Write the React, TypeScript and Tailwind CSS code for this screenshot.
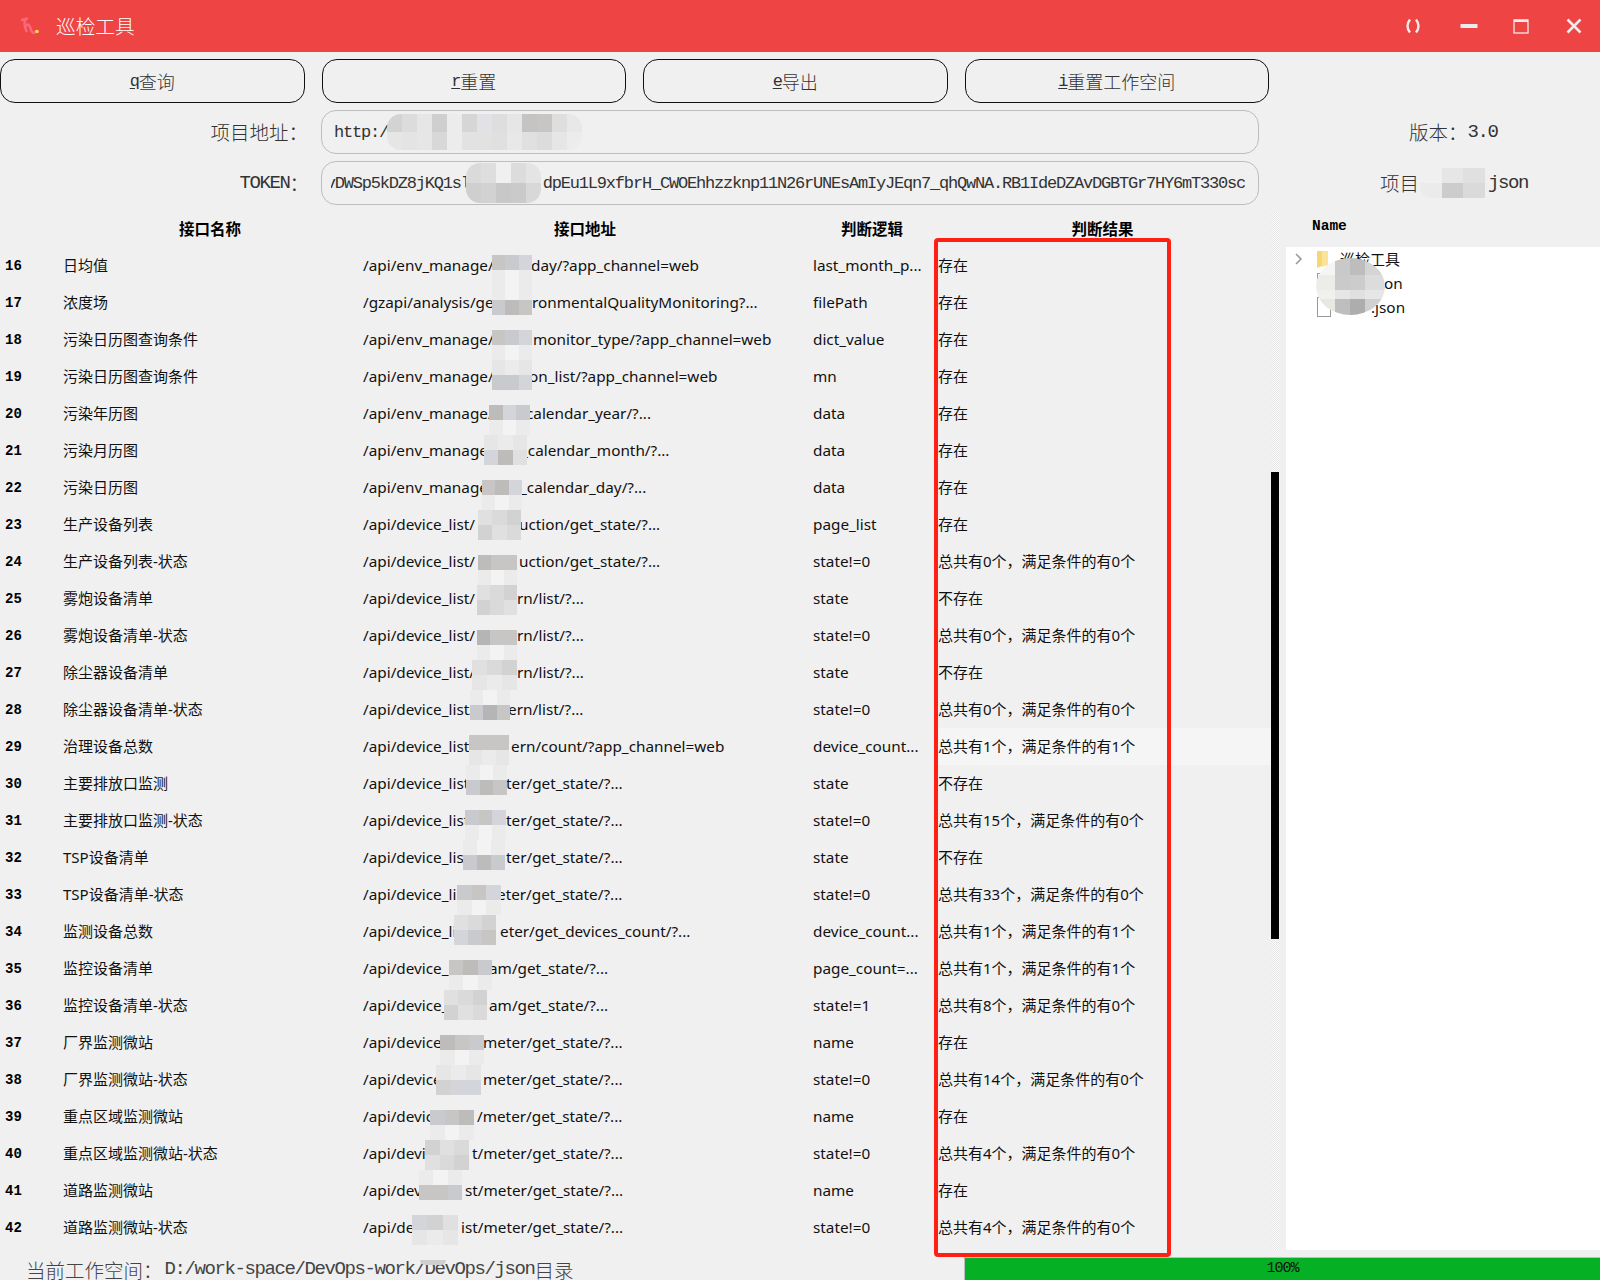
const d1 = "#c8c6c5", d2 = "#c9cace", d3 = "#d4d5da", d4 = "#bdbcbb", d5 = "#b5b5b5";
const l1 = "#ebebeb", l2 = "#f3f3f3", l3 = "#e6e6e6", m1 = "#dadada", m2 = "#d2d2d2", m3 = "#e0e0e0";

type Row = [number, string, string, string, number, number, string, string, string[], string[]];

const has = "存在";
const no = "不存在";
const cnt = (a: number, b: number) => `总共有${a}个，满足条件的有${b}个`;
const DK = [d1, d2, d3];
const DK2 = [d4, d3, d2];
const DK3 = [d2, d4, d1];
const LT = [l1, l2, l1];
const LT2 = [l3, l1, l3];
const MD = [m3, m1, m2];
const MD2 = [m2, m3, m1];

const mosaicTops = [255, 285, 330, 360, 405, 435, 480, 510, 555, 585, 630, 660, 690, 735, 765, 810, 840, 885, 915, 960, 990, 1035, 1065, 1110, 1140, 1170, 1215];
const rightShift = [-1, 0, 1, -3, -4, -6, -2, -2, 2, 0, 0, 0, -2, 2, -1, 0, 1, -4, 4, -3, 2, -1, 2, 3, 3, 3, 3];

const rows: Row[] = [
  [16, "日均值", "/api/env_manage/", "day/?app_channel=web", 492, 532, "last_month_p...", has, DK, LT],
  [17, "浓度场", "/gzapi/analysis/get", "ronmentalQualityMonitoring?...", 492, 532, "filePath", has, LT, DK3],
  [18, "污染日历图查询条件", "/api/env_manage/", "monitor_type/?app_channel=web", 492, 532, "dict_value", has, DK, LT],
  [19, "污染日历图查询条件", "/api/env_manage/", "on_list/?app_channel=web", 492, 532, "mn", has, LT2, [d2, d2, d3]],
  [20, "污染年历图", "/api/env_manage/", "calendar_year/?...", 489, 530, "data", has, DK2, LT],
  [21, "污染月历图", "/api/env_manage/", "_calendar_month/?...", 484, 527, "data", has, LT2, [d3, d4, m3]],
  [22, "污染日历图", "/api/env_manage/", "_calendar_day/?...", 482, 522, "data", has, [d1, d4, d3], LT],
  [23, "生产设备列表", "/api/device_list/", "uction/get_state/?...", 478, 521, "page_list", has, MD, MD2],
  [24, "生产设备列表-状态", "/api/device_list/", "uction/get_state/?...", 478, 517, "state!=0", cnt(0, 0), [d4, d1, d1], LT],
  [25, "雾炮设备清单", "/api/device_list/", "rn/list/?...", 477, 517, "state", no, MD, [m2, m1, m3]],
  [26, "雾炮设备清单-状态", "/api/device_list/", "rn/list/?...", 477, 517, "state!=0", cnt(0, 0), [d5, d1, d1], LT],
  [27, "除尘器设备清单", "/api/device_list/", "rn/list/?...", 472, 517, "state", no, MD, LT2],
  [28, "除尘器设备清单-状态", "/api/device_list/", "ern/list/?...", 470, 510, "state!=0", cnt(0, 0), LT, [d2, d5, d1]],
  [29, "治理设备总数", "/api/device_list/", "ern/count/?app_channel=web", 469, 509, "device_count...", cnt(1, 1), [d1, d1, d1], LT2],
  [30, "主要排放口监测", "/api/device_list/", "ter/get_state/?...", 466, 507, "state", no, LT, [d2, d4, d1]],
  [31, "主要排放口监测-状态", "/api/device_list/", "ter/get_state/?...", 465, 506, "state!=0", cnt(15, 0), [d2, d1, d3], LT],
  [32, "TSP设备清单", "/api/device_list/", "ter/get_state/?...", 463, 505, "state", no, LT, [d2, d4, d2]],
  [33, "TSP设备清单-状态", "/api/device_list/", "eter/get_state/?...", 457, 501, "state!=0", cnt(33, 0), [d2, d1, d3], LT],
  [34, "监测设备总数", "/api/device_list/", "eter/get_devices_count/?...", 454, 496, "device_count...", cnt(1, 1), MD, [d3, d2, d1]],
  [35, "监控设备清单", "/api/device_", "am/get_state/?...", 449, 492, "page_count=...", cnt(1, 1), [d1, d4, d2], LT],
  [36, "监控设备清单-状态", "/api/device_", "am/get_state/?...", 444, 487, "state!=1", cnt(8, 0), MD, MD2],
  [37, "厂界监测微站", "/api/device_", "meter/get_state/?...", 440, 484, "name", has, [d4, d1, d2], LT],
  [38, "厂界监测微站-状态", "/api/device_", "meter/get_state/?...", 436, 481, "state!=0", cnt(14, 0), LT2, [m2, d3, d3]],
  [39, "重点区域监测微站", "/api/device_", "/meter/get_state/?...", 430, 474, "name", has, [d2, d1, d4], LT],
  [40, "重点区域监测微站-状态", "/api/device", "t/meter/get_state/?...", 425, 469, "state!=0", cnt(4, 0), MD2, MD],
  [41, "道路监测微站", "/api/device", "st/meter/get_state/?...", 419, 462, "name", has, LT, [d1, d1, d2]],
  [42, "道路监测微站-状态", "/api/devic", "ist/meter/get_state/?...", 412, 458, "state!=0", cnt(4, 0), [d3, m2, m3], LT2],
];

function Mosaic({ top, bottom, width, offset }: { top: string[]; bottom: string[]; width: number; offset: number }) {
  return (
    <div className="relative z-10 grid h-[30px] shrink-0 grid-cols-3 grid-rows-2 self-start" style={{ width, marginTop: offset }}>
      {[...top, ...bottom].map((c, i) => (
        <div key={i} style={{ backgroundColor: c }} />
      ))}
    </div>
  );
}

function Cells({ colors }: { colors: string[] }) {
  return (
    <>
      {colors.map((c, i) => (
        <div key={i} style={{ backgroundColor: c }} />
      ))}
    </>
  );
}

function Cjk({ children, big = false }: { children: React.ReactNode; big?: boolean }) {
  return (
    <span
      className={
        big
          ? "font-['Noto_Sans_CJK_SC','Liberation_Mono',sans-serif] text-[19.5px] leading-none tracking-normal font-light"
          : "font-['Noto_Sans_CJK_SC','Liberation_Mono',sans-serif] text-[18px] leading-none tracking-normal font-light"
      }
    >
      {children}
    </span>
  );
}

const mono = "font-['Liberation_Mono','Noto_Sans_CJK_SC',monospace] text-[17px] leading-none tracking-[-1.2px]";
const mono10 = "font-['Liberation_Mono','Noto_Sans_CJK_SC',monospace] text-[19px] leading-none tracking-[-1.4px]";

function TopButton({ k, label }: { k: string; label: string }) {
  return (
    <button className={`flex h-[44px] items-center justify-center rounded-[15px] border-[1.5px] border-[#111] bg-[#f0f0f0] text-[#333] ${mono}`}>
      <span className="underline underline-offset-[2px]">{k}</span>
      <Cjk>{label}</Cjk>
    </button>
  );
}

export default function App() {
  return (
    <div className="relative h-[1280px] w-[1600px] overflow-hidden bg-[#f0f0f0] font-['Noto_Sans','Noto_Sans_CJK_SC',sans-serif] text-[15.3px] text-[#111]">
      {/* Title bar */}
      <header className="flex h-[52px] items-center justify-between bg-[#ef4444] pl-[20px] pr-[18px]">
        <div className="flex items-center gap-[16px]">
          <svg width="20" height="20" viewBox="0 0 20 20" fill="none" className="mt-[1px]">
            <path d="M2 4 L7 2.5 M5.5 3 C4 7 4.5 11 6.5 15 M6 10 C9 6 10 11 11.5 15 C13 18 15 17 16 15" stroke="#f9677a" strokeWidth="2.6" strokeLinecap="round" />
            <circle cx="17" cy="15.5" r="1.8" fill="#fde047" />
          </svg>
          <span className="font-['Noto_Sans_CJK_SC',sans-serif] text-[19.7px] font-extralight text-white">巡检工具</span>
        </div>
        <div className="flex items-center gap-[37px]">
          <svg width="16" height="16" viewBox="0 0 16 16" fill="none" stroke="#ececec" strokeWidth="2.4">
            <path d="M5 1.5 C1.5 6 1.5 10 5 14.5 M11 1.5 C14.5 6 14.5 10 11 14.5" />
          </svg>
          <svg width="18" height="16" viewBox="0 0 18 16" fill="#ececec" className="ml-[2px] mr-[-2px]">
            <rect x="0.5" y="6" width="17" height="4" />
          </svg>
          <svg width="16" height="16" viewBox="0 0 16 16" fill="none" stroke="#ececec">
            <rect x="1" y="2" width="14" height="13" strokeWidth="1.3" />
            <path d="M1 2.8 H15" strokeWidth="2.4" />
          </svg>
          <svg width="16" height="16" viewBox="0 0 16 16" fill="none" stroke="#ececec" strokeWidth="2.6">
            <path d="M1.5 1.5 L14.5 14.5 M14.5 1.5 L1.5 14.5" />
          </svg>
        </div>
      </header>

      {/* Buttons */}
      <div className="mt-[7px] grid w-[1269px] grid-cols-4 gap-[17px]">
        <TopButton k="q" label="查询" />
        <TopButton k="r" label="重置" />
        <TopButton k="e" label="导出" />
        <TopButton k="i" label="重置工作空间" />
      </div>

      {/* Form */}
      <div className="mt-[7px] grid grid-cols-[309px_938px_329px] gap-x-[12px] gap-y-[7px] text-[#333]">
        <div className={`flex h-[44px] items-center justify-end pr-[1px] ${mono10}`}>
          <Cjk big>项目地址：</Cjk>
        </div>
        <div className={`flex h-[44px] items-center rounded-[15px] border-[1.5px] border-[#bdbdbd] pl-[12px] ${mono}`}>
          http:/
          <div className="ml-[-1px] grid h-[36px] w-[195px] grid-cols-[repeat(13,1fr)] grid-rows-2 overflow-hidden rounded-[14px]">
            <Cells colors={["#d3d3d3", "#dcdcdc", "#e6e6e6", "#cfcfcf", "#ececec", "#d6d6d6", "#e2e2e6", "#dedede", "#e6e6e6", "#c6c4c2", "#c8c6c4", "#dedede", "#e8e8e8", "#e6e6e6", "#e4e4e4", "#e6e6e6", "#d8d8d8", "#ececec", "#e2e2e2", "#e2e2e2", "#e0e0e0", "#e8e8e8", "#e0e0e0", "#dcdcdc", "#e6e6e6", "#ececec"]} />
          </div>
        </div>
        <div className={`flex h-[44px] items-center pl-[138px] ${mono10}`}>
          <Cjk big>版本：</Cjk>3.0
        </div>
        <div className={`flex h-[44px] items-center justify-end ${mono10}`}>
          TOKEN<Cjk big>：</Cjk>
        </div>
        <div className={`flex h-[44px] items-center rounded-[15px] border-[1.5px] border-[#bdbdbd] pl-[9px] pr-[13px] ${mono}`}>
          <div className="flex h-full flex-1 items-center justify-end overflow-hidden whitespace-nowrap">
            <span className="shrink-0">vDWSp5kDZ8jKQ1sl</span>
            <div className="relative z-10 ml-[-4px] grid h-[40px] w-[75px] shrink-0 grid-cols-5 grid-rows-2 overflow-hidden rounded-[14px]">
              <Cells colors={["#dadada", "#dedede", "#f0f0f0", "#dcdcdc", "#e4e4e4", "#cfcfcf", "#d2d2d2", "#c8c8c8", "#cacaca", "#d8d8d8"]} />
            </div>
            <span className="ml-[2px] shrink-0">dpEu1L9xfbrH_CWOEhhzzknp11N26rUNEsAmIyJEqn7_qhQwNA.RB1IdeDZAvDGBTGr7HY6mT330sc</span>
          </div>
        </div>
        <div className={`flex h-[44px] items-center pl-[109px] ${mono10}`}>
          <Cjk big>项目</Cjk>
          <div className="ml-[1px] mr-[3px] grid h-[30px] w-[65px] grid-cols-3 grid-rows-2 overflow-hidden rounded-l-[12px]">
            <Cells colors={["#f0f0f0", "#e6e6e6", "#e0e0e0", "#ebebeb", "#cccccc", "#dadada"]} />
          </div>
          json
        </div>
      </div>

      {/* Main */}
      <div className="mt-[7px] flex h-[1038px]">
        <section className="w-[1271px]">
          <div className="grid h-[35px] grid-cols-[360px_450px_124px_337px] items-center pb-[2px] font-['Noto_Sans_CJK_SC',sans-serif] text-[15.5px] font-bold text-black">
            <div className="pl-[179px]">接口名称</div>
            <div className="pl-[194px]">接口地址</div>
            <div className="text-center">判断逻辑</div>
            <div className="text-center">判断结果</div>
          </div>
          {rows.map(([n, name, left, right, a, b, logic, result, top, bottom], i) => (
            <div key={n} className="grid h-[37px] grid-cols-[63px_300px_450px_121px_337px] items-center whitespace-nowrap">
              <div className="pl-[5px] pt-[2px] font-['Liberation_Mono',monospace] text-[14px] font-bold text-black">{n}</div>
              <div className="text-[15px]">{name}</div>
              <div className="flex h-[37px] items-center">
                <span className="shrink-0" style={{ width: a - 363 }}>{left}</span>
                <Mosaic top={top} bottom={bottom} width={b - a} offset={mosaicTops[i] - (247 + 37 * i)} />
                <span style={{ marginLeft: rightShift[i] }}>{right}</span>
              </div>
              <div>{logic}</div>
              <div className={`flex h-[37px] items-center pl-[4px] text-[15px] ${n === 29 ? "bg-[#f5f5f5]" : ""}`}>{result}</div>
            </div>
          ))}
        </section>

        {/* Scrollbar */}
        <div className="flex w-[9px] flex-col bg-[repeating-conic-gradient(#e6e6e6_0_25%,#fbfbfb_0_50%)] bg-[length:2px_2px]">
          <div className="h-[260px]" />
          <div className="mr-[1px] h-[467px] bg-black" />
        </div>

        {/* File tree */}
        <aside className="relative ml-[6px] flex-1">
          <div className="flex h-[35px] items-center pb-[6px] pl-[26px] font-['Liberation_Mono',monospace] text-[14.5px] font-bold text-black">Name</div>
          <div className="h-[1003px] bg-white">
            <div className="flex h-[24px] items-center">
              <svg width="12" height="14" viewBox="0 0 12 14" fill="none" stroke="#9a9a9a" strokeWidth="1.6" className="ml-[7px]">
                <path d="M3 2 L8 7 L3 12" />
              </svg>
              <svg width="14" height="18" viewBox="0 0 14 18" className="ml-[12px]">
                <path d="M0 1 H5 V16 L0 18 Z" fill="#f7d774" />
                <path d="M5 1 H11 V15 L5 17 Z" fill="#fbe49a" />
              </svg>
              <span className="ml-[9px] text-[15px]">巡检工具</span>
            </div>
            <div className="flex h-[24px] items-center pl-[31px]">
              <div className="h-[20px] w-[14px] border border-[#999] bg-white" />
              <span className="pl-[53px]">on</span>
            </div>
            <div className="flex h-[24px] items-center pl-[31px]">
              <div className="h-[20px] w-[14px] border border-[#999] bg-white" />
              <span className="pl-[40px]">.json</span>
            </div>
          </div>
          <div className="absolute left-[30px] top-[46px] grid h-[57px] w-[69px] grid-cols-[19px_15px_15px_20px] grid-rows-[17px_15px_9px_16px] overflow-hidden rounded-[50%]">
            <Cells colors={["#f4f4f4", "#c9c9c9", "#bdbdbd", "#d4d4d4", "#ecece8", "#cacaca", "#cccccc", "#dcdcdc", "#f0f0ee", "#e6e6e6", "#e0e0e0", "#e6e6e6", "#e8e8e0", "#bebebe", "#adadad", "#d0d0d0"]} />
          </div>
        </aside>
      </div>

      {/* Status bar */}
      <div className="mt-[7px] flex h-[23px]">
        <div className={`flex w-[964px] items-center whitespace-nowrap pl-[26px] pt-[2px] text-[#444] ${mono10}`}>
          <Cjk big>当前工作空间：</Cjk>
          <span className="ml-[2px]">D:/work-space/DevOps-work/DevOps/json</span>
          <Cjk big>目录</Cjk>
        </div>
        <div className="flex flex-1 items-center justify-center border-l border-t border-[#bcbcbc] bg-[#06b025] font-['Liberation_Mono',monospace] text-[15px] tracking-[-1px] text-[#111]">
          100%
        </div>
      </div>

      {/* Tail of the blurred strip above the status text */}
      <div className="absolute left-[420px] top-[1260px] h-[5px] w-[26px] rounded-b-full bg-[#cfcfcf]" />

      {/* Red annotation box */}
      <div className="pointer-events-none absolute left-[934px] top-[238px] z-20 h-[1019px] w-[237px] rounded-[4px] border-[4px] border-[#ff2015]" />
    </div>
  );
}
